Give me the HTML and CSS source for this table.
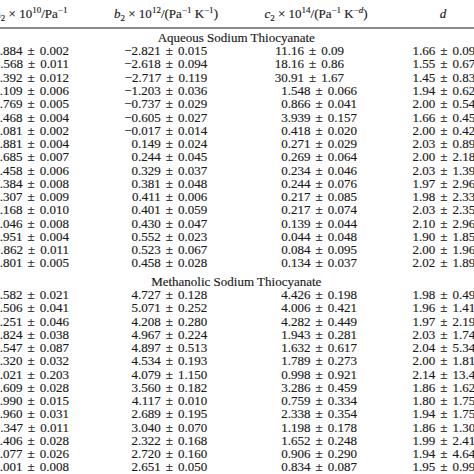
FILE: index.html
```html
<!DOCTYPE html>
<html>
<head>
<meta charset="utf-8">
<link rel="stylesheet" href="styles.css">
</head>
<body>
<div class="page">
  <div class="tbl">
    <div class="hd">a<span class="sb">2</span> × 10<span class="sp">10</span>/Pa<span class="sp">−1</span></div>
    <div class="hd"><i>b</i><span class="sb">2</span> × 10<span class="sp">12</span>/(Pa<span class="sp">−1</span> K<span class="sp">−1</span>)</div>
    <div class="hd"><i>c</i><span class="sb">2</span> × 10<span class="sp">14</span>/(Pa<span class="sp">−1</span> K<span class="sp">−<i>d</i></span>)</div>
    <div class="hd"><i>d</i></div>

    <div class="sec">Aqueous Sodium Thiocyanate</div>
    <div class="c1">3.884 ± 0.002</div><div class="c2">−2.821 ± 0.015</div><div class="c3"><span class="i">11</span>.16 ± 0.09</div><div class="c4">1.66 ± 0.09</div>
    <div class="c1">3.568 ± 0.011</div><div class="c2">−2.618 ± 0.094</div><div class="c3"><span class="i">18</span>.16 ± 0.86</div><div class="c4">1.55 ± 0.67</div>
    <div class="c1">3.392 ± 0.012</div><div class="c2">−2.717 ± 0.119</div><div class="c3"><span class="i">30</span>.91 ± 1.67</div><div class="c4">1.45 ± 0.83</div>
    <div class="c1">3.109 ± 0.006</div><div class="c2">−1.203 ± 0.036</div><div class="c3"><span class="i">1</span>.548 ± 0.066</div><div class="c4">1.94 ± 0.62</div>
    <div class="c1">2.769 ± 0.005</div><div class="c2">−0.737 ± 0.029</div><div class="c3"><span class="i">0</span>.866 ± 0.041</div><div class="c4">2.00 ± 0.54</div>
    <div class="c1">2.468 ± 0.004</div><div class="c2">−0.605 ± 0.027</div><div class="c3"><span class="i">3</span>.939 ± 0.157</div><div class="c4">1.66 ± 0.45</div>
    <div class="c1">2.081 ± 0.002</div><div class="c2">−0.017 ± 0.014</div><div class="c3"><span class="i">0</span>.418 ± 0.020</div><div class="c4">2.00 ± 0.42</div>
    <div class="c1">1.881 ± 0.004</div><div class="c2">0.149 ± 0.024</div><div class="c3"><span class="i">0</span>.271 ± 0.029</div><div class="c4">2.03 ± 0.89</div>
    <div class="c1">1.685 ± 0.007</div><div class="c2">0.244 ± 0.045</div><div class="c3"><span class="i">0</span>.269 ± 0.064</div><div class="c4">2.00 ± 2.18</div>
    <div class="c1">1.458 ± 0.006</div><div class="c2">0.329 ± 0.037</div><div class="c3"><span class="i">0</span>.234 ± 0.046</div><div class="c4">2.03 ± 1.39</div>
    <div class="c1">1.384 ± 0.008</div><div class="c2">0.381 ± 0.048</div><div class="c3"><span class="i">0</span>.244 ± 0.076</div><div class="c4">1.97 ± 2.96</div>
    <div class="c1">1.307 ± 0.009</div><div class="c2">0.411 ± 0.006</div><div class="c3"><span class="i">0</span>.217 ± 0.085</div><div class="c4">1.98 ± 2.33</div>
    <div class="c1">1.168 ± 0.010</div><div class="c2">0.401 ± 0.059</div><div class="c3"><span class="i">0</span>.217 ± 0.074</div><div class="c4">2.03 ± 2.35</div>
    <div class="c1">1.046 ± 0.008</div><div class="c2">0.430 ± 0.047</div><div class="c3"><span class="i">0</span>.139 ± 0.044</div><div class="c4">2.10 ± 2.96</div>
    <div class="c1">0.951 ± 0.004</div><div class="c2">0.552 ± 0.023</div><div class="c3"><span class="i">0</span>.044 ± 0.048</div><div class="c4">1.90 ± 1.85</div>
    <div class="c1">0.862 ± 0.011</div><div class="c2">0.523 ± 0.067</div><div class="c3"><span class="i">0</span>.084 ± 0.095</div><div class="c4">2.00 ± 1.96</div>
    <div class="c1">0.801 ± 0.005</div><div class="c2">0.458 ± 0.028</div><div class="c3"><span class="i">0</span>.134 ± 0.037</div><div class="c4">2.02 ± 1.89</div>

    <div class="sec sec2">Methanolic Sodium Thiocyanate</div>
    <div class="c1">4.582 ± 0.021</div><div class="c2">4.727 ± 0.128</div><div class="c3"><span class="i">4</span>.426 ± 0.198</div><div class="c4">1.98 ± 0.49</div>
    <div class="c1">4.506 ± 0.041</div><div class="c2">5.071 ± 0.252</div><div class="c3"><span class="i">4</span>.006 ± 0.421</div><div class="c4">1.96 ± 1.41</div>
    <div class="c1">4.251 ± 0.046</div><div class="c2">4.208 ± 0.280</div><div class="c3"><span class="i">4</span>.282 ± 0.449</div><div class="c4">1.97 ± 2.19</div>
    <div class="c1">3.824 ± 0.038</div><div class="c2">4.967 ± 0.224</div><div class="c3"><span class="i">1</span>.943 ± 0.281</div><div class="c4">2.03 ± 1.74</div>
    <div class="c1">3.547 ± 0.087</div><div class="c2">4.897 ± 0.513</div><div class="c3"><span class="i">1</span>.632 ± 0.617</div><div class="c4">2.04 ± 5.34</div>
    <div class="c1">3.320 ± 0.032</div><div class="c2">4.534 ± 0.193</div><div class="c3"><span class="i">1</span>.789 ± 0.273</div><div class="c4">2.00 ± 1.81</div>
    <div class="c1">3.021 ± 0.203</div><div class="c2">4.079 ± 1.150</div><div class="c3"><span class="i">0</span>.998 ± 0.921</div><div class="c4">2.14 ± 13.4</div>
    <div class="c1">2.609 ± 0.028</div><div class="c2">3.560 ± 0.182</div><div class="c3"><span class="i">3</span>.286 ± 0.459</div><div class="c4">1.86 ± 1.62</div>
    <div class="c1">1.990 ± 0.015</div><div class="c2">4.117 ± 0.010</div><div class="c3"><span class="i">0</span>.759 ± 0.334</div><div class="c4">1.80 ± 1.75</div>
    <div class="c1">1.960 ± 0.031</div><div class="c2">2.689 ± 0.195</div><div class="c3"><span class="i">2</span>.338 ± 0.354</div><div class="c4">1.94 ± 1.75</div>
    <div class="c1">1.347 ± 0.011</div><div class="c2">3.040 ± 0.070</div><div class="c3"><span class="i">1</span>.198 ± 0.178</div><div class="c4">1.86 ± 1.30</div>
    <div class="c1">1.406 ± 0.028</div><div class="c2">2.322 ± 0.168</div><div class="c3"><span class="i">1</span>.652 ± 0.248</div><div class="c4">1.99 ± 2.41</div>
    <div class="c1">1.077 ± 0.026</div><div class="c2">2.720 ± 0.160</div><div class="c3"><span class="i">0</span>.906 ± 0.290</div><div class="c4">1.94 ± 4.64</div>
    <div class="c1">1.001 ± 0.008</div><div class="c2">2.651 ± 0.050</div><div class="c3"><span class="i">0</span>.834 ± 0.087</div><div class="c4">1.95 ± 0.99</div>
  </div>
</div>
</body>
</html>
```

FILE: styles.css
```css
html, body {
  margin: 0;
  padding: 0;
  background: #ffffff;
}

.page {
  width: 474px;
  height: 474px;
  overflow: hidden;
  font-family: "Liberation Serif", "Times New Roman", serif;
  font-size: 13px;
  color: #1a1a1a;
  -webkit-text-stroke: 0.15px #1a1a1a;
}

.tbl {
  display: grid;
  grid-template-columns: 134.5px 135px 165px 89px;
  margin-left: -36px;
  width: 523.5px;
  line-height: 13.26px;
  white-space: nowrap;
}

.hd {
  text-align: center;
  padding-top: 7px;
  padding-bottom: 7px;
  border-bottom: 2px solid #8a8a8a;
}

.sb, .sp {
  font-size: 9px;
  line-height: 0;
  position: relative;
}
.sb { top: 3px; }
.sp { top: -5px; }

.sec {
  grid-column: 1 / -1;
  text-align: center;
  padding-left: 21px;
  margin-top: 1.7px;
}

.sec2 {
  margin-top: 5px;
}

.c1, .c2, .c3, .c4 {
  word-spacing: 1.8px;
}

.c1 {
  text-align: right;
  padding-right: 29.5px;
}

.c2 {
  text-align: right;
  padding-right: 26.2px;
}

.c3 {
  padding-left: 41.2px;
}

.i {
  display: inline-block;
  width: 13px;
  text-align: right;
}

.c4 {
  padding-left: 14px;
}
```
